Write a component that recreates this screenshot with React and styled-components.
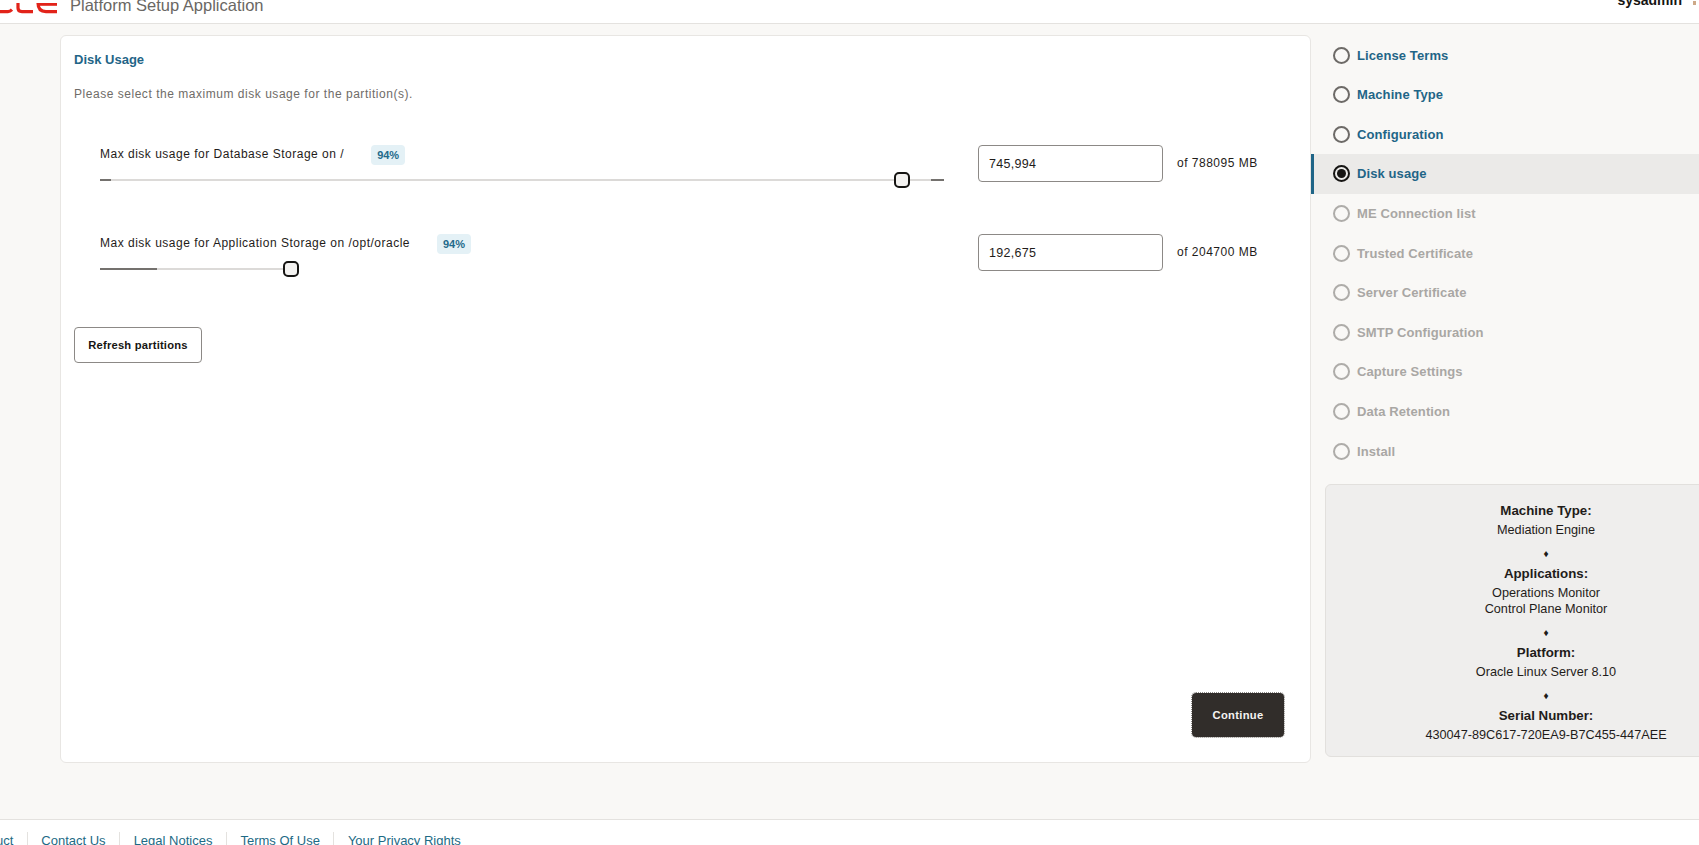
import styled, { createGlobalStyle } from "styled-components";

const GlobalStyle = createGlobalStyle`
  html, body, #root {
    margin: 0;
    height: 100%;
  }
  body {
    overflow: hidden;
    background: #f9f8f6;
    font-family: "Liberation Sans", Arial, sans-serif;
    color: #1f1c1a;
  }
`;

const Page = styled.div`
  display: grid;
  grid-template-rows: 24px 795px 26px;
  width: 1699px;
  height: 845px;
  overflow: hidden;
`;

const Header = styled.header`
  display: flex;
  align-items: flex-end;
  justify-content: space-between;
  background: #fff;
  border-bottom: 1px solid #e4e2df;
  overflow: hidden;
`;

const Brand = styled.div`
  display: flex;
  align-items: flex-end;
  gap: 12px;
  padding-bottom: 8px;
`;

const Logo = styled.svg`
  display: block;
  width: 58px;
  height: 11px;
  margin-bottom: 1px;
`;

const AppTitle = styled.span`
  font-size: 16.5px;
  line-height: 20px;
  color: #6a6763;
  white-space: nowrap;
`;

const User = styled.div`
  display: flex;
  align-items: flex-end;
  gap: 11px;
  padding-bottom: 14px;
  margin-right: 3px;
  font-size: 14px;
  line-height: 18px;
  font-weight: 700;
  color: #161513;
`;

const Caret = styled.span`
  width: 3px;
  height: 4px;
  margin-bottom: 4px;
  background: #cda988;
`;

const Main = styled.main`
  display: flex;
  align-items: flex-start;
  padding: 11px 0 0 60px;
  overflow: hidden;
`;

const Card = styled.section`
  flex: none;
  display: flex;
  flex-direction: column;
  box-sizing: border-box;
  width: 1251px;
  height: 728px;
  padding: 14px 26px 25px 13px;
  background: #fff;
  border: 1px solid #e8e6e3;
  border-radius: 6px;
`;

const Title = styled.h2`
  margin: 0;
  font-size: 13px;
  line-height: 20px;
  font-weight: 700;
  color: #1f6587;
`;

const Intro = styled.p`
  margin: 14px 0 39px;
  font-size: 12px;
  line-height: 20px;
  letter-spacing: 0.53px;
  color: #6f6c68;
`;

const Partitions = styled.div`
  display: flex;
  flex-direction: column;
  gap: 44px;
  padding-left: 26px;
`;

const Partition = styled.div`
  display: grid;
  grid-template-columns: 844px 185px auto;
  column-gap: 34px;
  height: 45px;
`;

const SliderColumn = styled.div`
  display: flex;
  flex-direction: column;
  gap: 9px;
`;

const LabelRow = styled.div`
  display: flex;
  align-items: flex-start;
  gap: 27px;
  height: 20px;
`;

const Label = styled.label`
  font-size: 12px;
  line-height: 22px;
  letter-spacing: 0.5px;
  color: #1f1c1a;
`;

const Badge = styled.span`
  margin-top: 2px;
  width: 34px;
  height: 20px;
  border-radius: 4px;
  background: #e4f1f6;
  color: #236a8b;
  font-size: 11px;
  line-height: 21px;
  font-weight: 700;
  text-align: center;
`;

const Slider = styled.div`
  position: relative;
  width: ${(props) => props.$width}px;
  height: 16px;
`;

const Track = styled.div`
  position: absolute;
  left: 0;
  right: 0;
  top: 7px;
  height: 2px;
  background: #dcdad8;
`;

const Fill = styled.div`
  position: absolute;
  left: ${(props) => props.$left}px;
  top: 7px;
  width: ${(props) => props.$width}px;
  height: 2px;
  background: #74716e;
`;

const Thumb = styled.div`
  position: absolute;
  left: ${(props) => props.$left}px;
  top: 0;
  box-sizing: border-box;
  width: 16px;
  height: 16px;
  border: 2px solid #161513;
  border-radius: 5px;
  background: #f4f3f1;
`;

const SizeInput = styled.input`
  box-sizing: border-box;
  width: 185px;
  height: 37px;
  margin-top: 2px;
  padding: 0 10px;
  border: 1px solid #8c8986;
  border-radius: 4px;
  background: #fff;
  font-family: inherit;
  font-size: 12.5px;
  letter-spacing: 0.3px;
  color: #1f1c1a;
`;

const Total = styled.span`
  margin: 10px 0 0 -20px;
  font-size: 12px;
  line-height: 20px;
  letter-spacing: 0.5px;
  white-space: nowrap;
`;

const RefreshButton = styled.button`
  align-self: flex-start;
  box-sizing: border-box;
  width: 128px;
  height: 36px;
  margin-top: 50px;
  padding: 0;
  border: 1px solid #8c8986;
  border-radius: 4px;
  background: #fff;
  font-family: inherit;
  font-size: 11.2px;
  font-weight: 700;
  letter-spacing: 0.2px;
  color: #161513;
`;

const ContinueButton = styled.button`
  align-self: flex-end;
  box-sizing: border-box;
  width: 92px;
  height: 44px;
  margin-top: auto;
  padding: 0;
  border: none;
  border-radius: 4px;
  outline: 1px dotted #8d8a87;
  background: #312d2a;
  font-family: inherit;
  font-size: 11.2px;
  font-weight: 700;
  letter-spacing: 0.3px;
  color: #f5f4f2;
`;

const Sidebar = styled.aside`
  flex: none;
  width: 388px;
`;

const Steps = styled.ol`
  margin: 0.4px 0 0;
  padding: 0;
  list-style: none;
`;

const Step = styled.li`
  display: flex;
  align-items: center;
  gap: 7px;
  box-sizing: border-box;
  height: 39.6px;
  padding-left: ${(props) => (props.$active ? "19px" : "22px")};
  border-left: ${(props) => (props.$active ? "3px solid #1f6587" : "none")};
  background: ${(props) => (props.$active ? "#ebeae8" : "transparent")};
  font-size: 13px;
  font-weight: 700;
  letter-spacing: 0.1px;
  color: ${(props) => (props.$disabled ? "#a9a7a4" : "#1f6587")};
`;

const Radio = styled.span`
  display: flex;
  align-items: center;
  justify-content: center;
  box-sizing: border-box;
  width: 17px;
  height: 17px;
  border-radius: 50%;
  border: 2px solid
    ${(props) =>
      props.$active ? "#161513" : props.$disabled ? "#aeaca9" : "#6d6a67"};

  &::after {
    content: "";
    display: ${(props) => (props.$active ? "block" : "none")};
    width: 9px;
    height: 9px;
    border-radius: 50%;
    background: #161513;
  }
`;

const Summary = styled.div`
  box-sizing: border-box;
  width: 442px;
  height: 273px;
  margin: 12.6px 0 0 14px;
  padding-top: 14px;
  border: 1px solid #e2e0dd;
  border-radius: 6px;
  background: #efeeed;
  text-align: center;
`;

const SummaryHeading = styled.div`
  margin-top: 3px;
  font-size: 13.3px;
  line-height: 18px;
  font-weight: 700;
  color: #1f1c1a;
`;

const SummaryValue = styled.div`
  margin-top: 2.5px;
  font-size: 12.7px;
  line-height: 16px;
  color: #1f1c1a;
`;

const SummaryLine = styled.div`
  font-size: 12.7px;
  line-height: 16px;
  color: #1f1c1a;
`;

const Diamond = styled.div`
  margin-top: 7.5px;
  font-size: 10px;
  line-height: 16px;
  color: #1f1c1a;
`;

const Footer = styled.footer`
  display: flex;
  align-items: flex-start;
  margin-left: -45px;
  padding-top: 12px;
  background: #fff;
  border-top: 1px solid #e4e2df;
  overflow: hidden;
`;

const FooterLink = styled.a`
  padding: 0 13.5px;
  border-right: 1px solid #e4e2df;
  font-size: 13px;
  line-height: 18px;
  color: #1d6a85;
  white-space: nowrap;

  &:last-child {
    border-right: none;
  }
`;

const partitions = [
  {
    label: "Max disk usage for Database Storage on /",
    value: "745,994",
    total: "of 788095 MB",
    width: 844,
    thumb: 794,
    fills: [
      { left: 0, width: 11 },
      { left: 831, width: 13 },
    ],
  },
  {
    label: "Max disk usage for Application Storage on /opt/oracle",
    value: "192,675",
    total: "of 204700 MB",
    width: 192,
    thumb: 183,
    fills: [{ left: 0, width: 57 }],
  },
];

const steps = [
  { name: "License Terms" },
  { name: "Machine Type" },
  { name: "Configuration" },
  { name: "Disk usage", active: true },
  { name: "ME Connection list", disabled: true },
  { name: "Trusted Certificate", disabled: true },
  { name: "Server Certificate", disabled: true },
  { name: "SMTP Configuration", disabled: true },
  { name: "Capture Settings", disabled: true },
  { name: "Data Retention", disabled: true },
  { name: "Install", disabled: true },
];

const footerLinks = [
  "Product",
  "Contact Us",
  "Legal Notices",
  "Terms Of Use",
  "Your Privacy Rights",
];

const App = () => {
  return (
    <>
      <GlobalStyle />
      <Page>
        <Header>
          <Brand>
            <Logo viewBox="0 0 58 11" fill="none" stroke="#e2231a" strokeWidth="3.2">
              <path d="M0 8.600h8c2 0 3-1 4-2" />
              <path d="M18 0v5c0 2.500 1 3.600 4 3.600h11" />
              <path d="M38 0c0 6 3 8.600 8 8.600h11" />
              <path d="M38 1.200h19" />
            </Logo>
            <AppTitle>Platform Setup Application</AppTitle>
          </Brand>
          <User>
            sysadmin
            <Caret />
          </User>
        </Header>
        <Main>
          <Card>
            <Title>Disk Usage</Title>
            <Intro>Please select the maximum disk usage for the partition(s).</Intro>
            <Partitions>
              {partitions.map((partition) => (
                <Partition key={partition.label}>
                  <SliderColumn>
                    <LabelRow>
                      <Label>{partition.label}</Label>
                      <Badge>94%</Badge>
                    </LabelRow>
                    <Slider $width={partition.width}>
                      <Track />
                      {partition.fills.map((fill) => (
                        <Fill key={fill.left} $left={fill.left} $width={fill.width} />
                      ))}
                      <Thumb $left={partition.thumb} />
                    </Slider>
                  </SliderColumn>
                  <SizeInput defaultValue={partition.value} />
                  <Total>{partition.total}</Total>
                </Partition>
              ))}
            </Partitions>
            <RefreshButton>Refresh partitions</RefreshButton>
            <ContinueButton>Continue</ContinueButton>
          </Card>
          <Sidebar>
            <Steps>
              {steps.map((step) => (
                <Step key={step.name} $active={step.active} $disabled={step.disabled}>
                  <Radio $active={step.active} $disabled={step.disabled} />
                  {step.name}
                </Step>
              ))}
            </Steps>
            <Summary>
              <SummaryHeading>Machine Type:</SummaryHeading>
              <SummaryValue>Mediation Engine</SummaryValue>
              <Diamond>♦</Diamond>
              <SummaryHeading>Applications:</SummaryHeading>
              <SummaryValue>Operations Monitor</SummaryValue>
              <SummaryLine>Control Plane Monitor</SummaryLine>
              <Diamond>♦</Diamond>
              <SummaryHeading>Platform:</SummaryHeading>
              <SummaryValue>Oracle Linux Server 8.10</SummaryValue>
              <Diamond>♦</Diamond>
              <SummaryHeading>Serial Number:</SummaryHeading>
              <SummaryValue>430047-89C617-720EA9-B7C455-447AEE</SummaryValue>
            </Summary>
          </Sidebar>
        </Main>
        <Footer>
          {footerLinks.map((link) => (
            <FooterLink key={link}>{link}</FooterLink>
          ))}
        </Footer>
      </Page>
    </>
  );
};

export default App;
